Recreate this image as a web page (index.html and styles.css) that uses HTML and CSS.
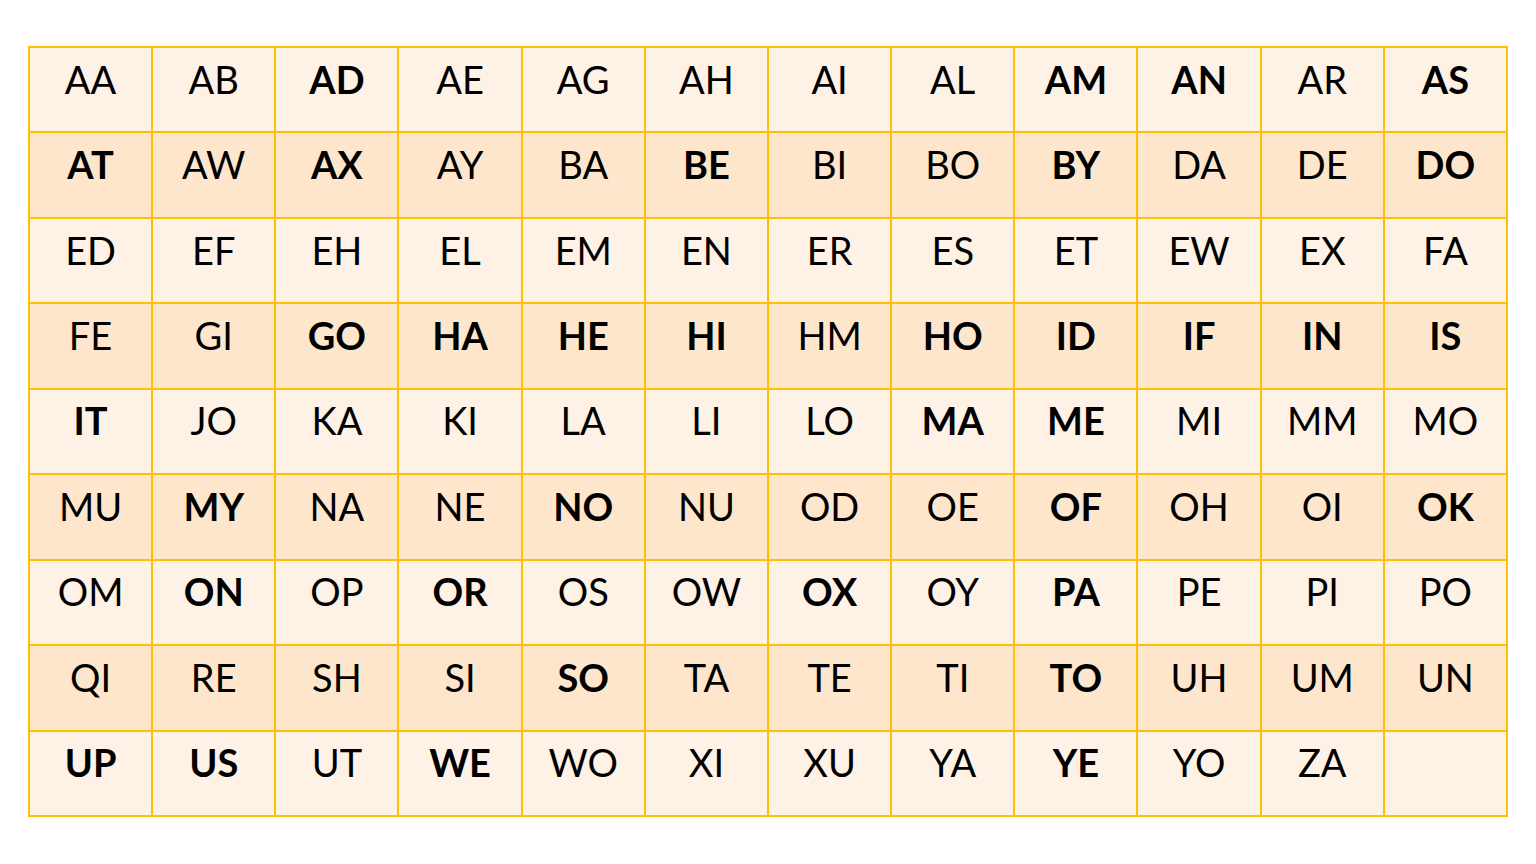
FILE: index.html
```html
<!DOCTYPE html>
<html>
<head>
<meta charset="utf-8">
<link rel="stylesheet" href="styles.css">
</head>
<body>
<div class="page">
  <div class="grid">
    <div class="c">AA</div><div class="c">AB</div><div class="c b">AD</div><div class="c">AE</div><div class="c">AG</div><div class="c">AH</div><div class="c">AI</div><div class="c">AL</div><div class="c b">AM</div><div class="c b">AN</div><div class="c">AR</div><div class="c b">AS</div>
    <div class="c d b">AT</div><div class="c d">AW</div><div class="c d b">AX</div><div class="c d">AY</div><div class="c d">BA</div><div class="c d b">BE</div><div class="c d">BI</div><div class="c d">BO</div><div class="c d b">BY</div><div class="c d">DA</div><div class="c d">DE</div><div class="c d b">DO</div>
    <div class="c">ED</div><div class="c">EF</div><div class="c">EH</div><div class="c">EL</div><div class="c">EM</div><div class="c">EN</div><div class="c">ER</div><div class="c">ES</div><div class="c">ET</div><div class="c">EW</div><div class="c">EX</div><div class="c">FA</div>
    <div class="c d">FE</div><div class="c d">GI</div><div class="c d b">GO</div><div class="c d b">HA</div><div class="c d b">HE</div><div class="c d b">HI</div><div class="c d">HM</div><div class="c d b">HO</div><div class="c d b">ID</div><div class="c d b">IF</div><div class="c d b">IN</div><div class="c d b">IS</div>
    <div class="c b">IT</div><div class="c">JO</div><div class="c">KA</div><div class="c">KI</div><div class="c">LA</div><div class="c">LI</div><div class="c">LO</div><div class="c b">MA</div><div class="c b">ME</div><div class="c">MI</div><div class="c">MM</div><div class="c">MO</div>
    <div class="c d">MU</div><div class="c d b">MY</div><div class="c d">NA</div><div class="c d">NE</div><div class="c d b">NO</div><div class="c d">NU</div><div class="c d">OD</div><div class="c d">OE</div><div class="c d b">OF</div><div class="c d">OH</div><div class="c d">OI</div><div class="c d b">OK</div>
    <div class="c">OM</div><div class="c b">ON</div><div class="c">OP</div><div class="c b">OR</div><div class="c">OS</div><div class="c">OW</div><div class="c b">OX</div><div class="c">OY</div><div class="c b">PA</div><div class="c">PE</div><div class="c">PI</div><div class="c">PO</div>
    <div class="c d">QI</div><div class="c d">RE</div><div class="c d">SH</div><div class="c d">SI</div><div class="c d b">SO</div><div class="c d">TA</div><div class="c d">TE</div><div class="c d">TI</div><div class="c d b">TO</div><div class="c d">UH</div><div class="c d">UM</div><div class="c d">UN</div>
    <div class="c b">UP</div><div class="c b">US</div><div class="c">UT</div><div class="c b">WE</div><div class="c">WO</div><div class="c">XI</div><div class="c">XU</div><div class="c">YA</div><div class="c b">YE</div><div class="c">YO</div><div class="c">ZA</div><div class="c"></div>
  </div>
</div>
</body>
</html>
```

FILE: styles.css
```css
* { box-sizing: border-box; }
html, body {
  margin: 0;
  padding: 0;
  background: #ffffff;
}
body {
  width: 1536px;
  height: 864px;
  overflow: hidden;
  font-family: "Lato", "Open Sans", "Liberation Sans", sans-serif;
  color: #000;
}
.page {
  padding: 46px 28px 0 28px;
}
.grid {
  width: 1480px;
  height: 771px;
  display: grid;
  grid-template-columns: repeat(12, 1fr);
  grid-template-rows: repeat(9, 1fr);
  gap: 2px;
  padding: 2px;
  background: #ffc000;
}
.c {
  background: #fef1e6;
  display: flex;
  align-items: center;
  justify-content: center;
  font-size: 38px;
  font-weight: 400;
  padding-bottom: 22px;
  line-height: 1;
}
.c.d {
  background: #fde6cb;
}
.c.b {
  font-weight: 700;
}
```
